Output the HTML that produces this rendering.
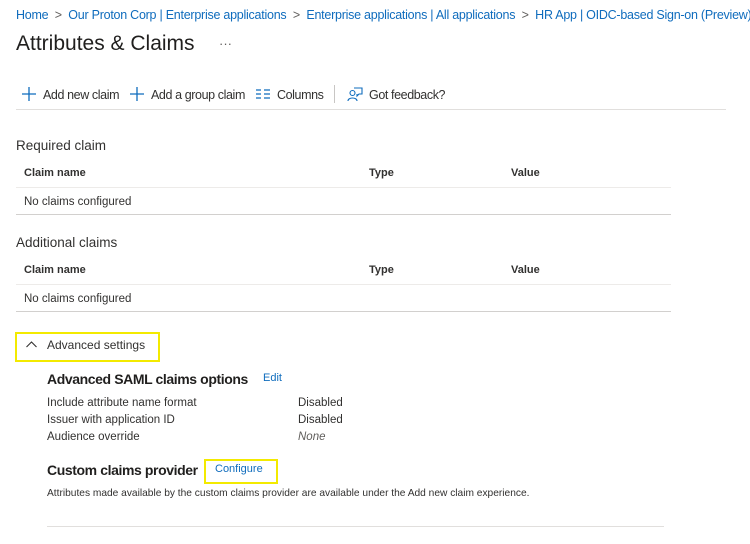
<!DOCTYPE html>
<html><head><meta charset="utf-8"><style>
body{margin:0;width:750px;height:544px;background:#fff;font-family:"Liberation Sans",sans-serif;color:#323130;position:relative;overflow:hidden}
.a{position:absolute;white-space:nowrap}
.lnk{color:#0f6cbd}
.hr{position:absolute;height:1px;background:#e1dfdd}
.yb{position:absolute;border:2px solid #f3ea00}
.tb{font-size:12.5px;letter-spacing:-0.4px}
.b{font-size:11.5px}
.h{font-size:11px;font-weight:bold}
.sh{font-size:14px;font-weight:bold;letter-spacing:-0.4px;color:#201f1e}
</style></head><body>
<div class="a lnk" style="left:16px;top:8px;font-size:12.5px;letter-spacing:-0.25px">Home <span style="color:#605e5c">&nbsp;&gt;&nbsp;</span> Our Proton Corp | Enterprise applications <span style="color:#605e5c">&nbsp;&gt;&nbsp;</span> Enterprise applications | All applications <span style="color:#605e5c">&nbsp;&gt;&nbsp;</span> HR App | OIDC-based Sign-on (Preview)</div>
<div class="a" style="left:16px;top:32px;font-size:21px;color:#201f1e">Attributes &amp; Claims</div>
<div class="a" style="left:219px;top:36px;font-size:13px;color:#605e5c">···</div>

<svg class="a" style="left:22px;top:87px" width="14" height="14"><path d="M7 0V14M0 7H14" stroke="#0f6cbd" stroke-width="1.3"/></svg>
<div class="a tb" style="left:43px;top:88px">Add new claim</div>
<svg class="a" style="left:130px;top:87px" width="14" height="14"><path d="M7 0V14M0 7H14" stroke="#0f6cbd" stroke-width="1.3"/></svg>
<div class="a tb" style="left:151px;top:88px">Add a group claim</div>
<svg class="a" style="left:256px;top:89px" width="14" height="10"><path d="M0 1H5M0 5H5M0 9H5M8 1H14M8 5H14M8 9H14" stroke="#0f6cbd" stroke-width="1.2"/></svg>
<div class="a tb" style="left:277px;top:88px">Columns</div>
<div class="a" style="left:334px;top:85px;width:1px;height:18px;background:#c8c6c4"></div>
<svg class="a" style="left:347px;top:86px" width="16" height="16"><circle cx="5.5" cy="7" r="2.5" fill="none" stroke="#0f6cbd" stroke-width="1.1"/><path d="M1 15C1 11 10 11 10 15M7 2H15V8H12L10 10V8" fill="none" stroke="#0f6cbd" stroke-width="1.1"/></svg>
<div class="a tb" style="left:369px;top:88px">Got feedback?</div>
<div class="hr" style="left:16px;top:109px;width:710px"></div>

<div class="a" style="left:16px;top:138px;font-size:13.5px">Required claim</div>
<div class="a h" style="left:24px;top:167px">Claim name</div>
<div class="a h" style="left:369px;top:167px">Type</div>
<div class="a h" style="left:511px;top:167px">Value</div>
<div class="hr" style="left:16px;top:187px;width:655px;background:#edebe9"></div>
<div class="a b" style="left:24px;top:196px">No claims configured</div>
<div class="hr" style="left:16px;top:214px;width:655px;background:#d2d0ce"></div>

<div class="a" style="left:16px;top:235px;font-size:13.5px">Additional claims</div>
<div class="a h" style="left:24px;top:264px">Claim name</div>
<div class="a h" style="left:369px;top:264px">Type</div>
<div class="a h" style="left:511px;top:264px">Value</div>
<div class="hr" style="left:16px;top:284px;width:655px;background:#edebe9"></div>
<div class="a b" style="left:24px;top:293px">No claims configured</div>
<div class="hr" style="left:16px;top:311px;width:655px;background:#d2d0ce"></div>

<div class="yb" style="left:15px;top:332px;width:141px;height:26px"></div>
<svg class="a" style="left:26px;top:341px" width="11" height="7"><path d="M0.5 6L5.5 1L10.5 6" fill="none" stroke="#323130" stroke-width="1.1"/></svg>
<div class="a" style="left:47px;top:338px;font-size:12px">Advanced settings</div>
<div class="a sh" style="left:47px;top:371px">Advanced SAML claims options</div>
<div class="a lnk" style="left:263px;top:372px;font-size:11px">Edit</div>
<div class="a b" style="left:47px;top:397px">Include attribute name format</div>
<div class="a b" style="left:298px;top:397px">Disabled</div>
<div class="a b" style="left:47px;top:414px">Issuer with application ID</div>
<div class="a b" style="left:298px;top:414px">Disabled</div>
<div class="a b" style="left:47px;top:431px">Audience override</div>
<div class="a b" style="left:298px;top:431px;font-style:italic;color:#605e5c">None</div>
<div class="a sh" style="left:47px;top:462px">Custom claims provider</div>
<div class="yb" style="left:204px;top:459px;width:70px;height:21px"></div>
<div class="a lnk" style="left:215px;top:463px;font-size:11px">Configure</div>
<div class="a" style="left:47px;top:488px;font-size:10.2px">Attributes made available by the custom claims provider are available under the Add new claim experience.</div>
<div class="hr" style="left:47px;top:526px;width:617px"></div>
</body></html>
